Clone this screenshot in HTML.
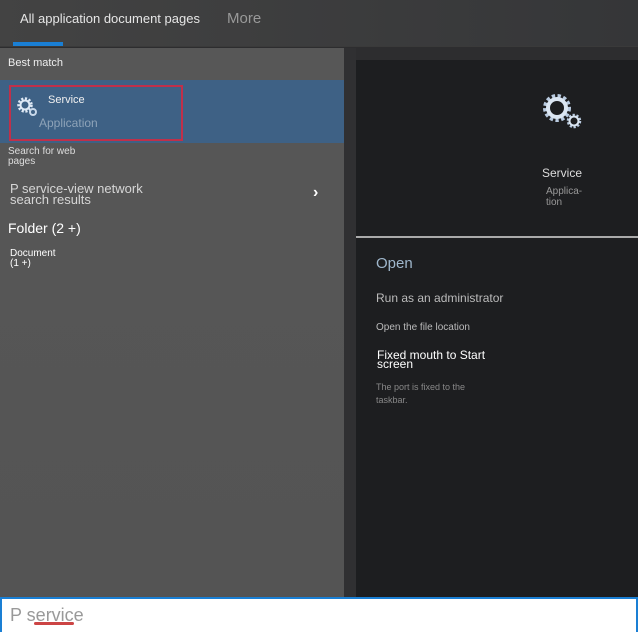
<!DOCTYPE html>
<html><head><meta charset="utf-8"><style>
*{margin:0;padding:0;box-sizing:border-box}
body{width:638px;height:632px;overflow:hidden;background:#2d2d2f;font-family:"Liberation Sans",sans-serif;position:relative}
.top{position:absolute;left:0;top:0;width:638px;height:47px;background:linear-gradient(90deg,#434343,#353638);border-bottom:1px solid #3a3a3a}
.left{position:absolute;left:0;top:48px;width:344px;height:549px;background:linear-gradient(180deg,#575757,#545454)}
.strip{position:absolute;left:344px;top:48px;width:12px;height:549px;background:#303032}
.right{position:absolute;left:356px;top:60px;width:282px;height:537px;background:#1d1e20}
.t{position:absolute;white-space:nowrap}
</style></head><body>
<div class="top"></div>
<div class="t" style="left:20px;top:11px;font-size:13px;color:#e6e6e6">All application document pages</div>
<div class="t" style="left:227px;top:10px;font-size:15px;color:#999">More</div>
<div style="position:absolute;left:13px;top:42px;width:50px;height:4px;background:#1a7fd4"></div>
<div class="left"></div>
<div class="strip"></div>
<div class="t" style="left:8px;top:57px;font-size:11px;color:#eee">Best match</div>
<div style="position:absolute;left:0;top:80px;width:344px;height:63px;background:#3e6185"></div>
<div style="position:absolute;left:9px;top:85px;width:174px;height:56px;border:2px solid #c0304a"></div>
<svg style="position:absolute;left:17px;top:97px" width="22" height="20" viewBox="0 0 22 20">
<circle cx="8" cy="8" r="6" fill="none" stroke="#dfe9f5" stroke-width="3.5" stroke-dasharray="2 1.5"/>
<circle cx="8" cy="8" r="4.5" fill="none" stroke="#dfe9f5" stroke-width="2"/>
<circle cx="16" cy="15" r="3" fill="none" stroke="#c8d8ea" stroke-width="2"/></svg>
<div class="t" style="left:48px;top:94px;font-size:11px;color:#f0f0f0">Service</div>
<div class="t" style="left:39px;top:116px;font-size:12px;color:#8ea3b8">Application</div>
<div class="t" style="left:8px;top:147px;font-size:10px;color:#ddd;line-height:10px">Search for web<br>pages</div>
<div class="t" style="left:10px;top:183px;font-size:13px;color:#d6d6d6;line-height:11px">P service-view network<br>search results</div>
<div class="t" style="left:313px;top:184px;font-size:16px;color:#fff;font-weight:bold">›</div>
<div class="t" style="left:8px;top:220px;font-size:14px;color:#fff">Folder (2 +)</div>
<div class="t" style="left:10px;top:249px;font-size:10px;color:#fff;line-height:10px">Document<br>(1 +)</div>
<div class="right"></div>
<svg style="position:absolute;left:541px;top:91px" width="44" height="42" viewBox="0 0 44 42">
<circle cx="16" cy="17" r="11" fill="none" stroke="#b9cbe0" stroke-width="6" stroke-dasharray="3 2.2"/>
<circle cx="16" cy="17" r="9" fill="none" stroke="#dbe6f2" stroke-width="4"/>
<circle cx="33" cy="30" r="5.5" fill="none" stroke="#b9cbe0" stroke-width="3.5" stroke-dasharray="2 1.5"/>
<circle cx="33" cy="30" r="4.5" fill="none" stroke="#dbe6f2" stroke-width="2"/></svg>
<div class="t" style="left:542px;top:166px;font-size:12px;color:#ddd">Service</div>
<div class="t" style="left:546px;top:186px;font-size:10px;color:#999;line-height:11px">Applica-<br>tion</div>
<div style="position:absolute;left:356px;top:236px;width:282px;height:2px;background:#aaa"></div>
<div class="t" style="left:376px;top:255px;font-size:15px;color:#9fb7cc">Open</div>
<div class="t" style="left:376px;top:291px;font-size:12px;color:#bbb">Run as an administrator</div>
<div class="t" style="left:376px;top:322px;font-size:10px;color:#bbb">Open the file location</div>
<div class="t" style="left:377px;top:351px;font-size:12px;color:#fff;line-height:9px">Fixed mouth to Start<br>screen</div>
<div class="t" style="left:376px;top:381px;font-size:9px;color:#888;line-height:13px">The port is fixed to the<br>taskbar.</div>
<div style="position:absolute;left:0;top:597px;width:638px;height:35px;background:#fff;border:2px solid #1a7fd4;border-bottom:none"></div>
<div class="t" style="left:10px;top:605px;font-size:18px;color:#999">P service</div>
<div style="position:absolute;left:34px;top:622px;width:40px;height:3px;background:#c44;border-radius:2px"></div>
</body></html>
